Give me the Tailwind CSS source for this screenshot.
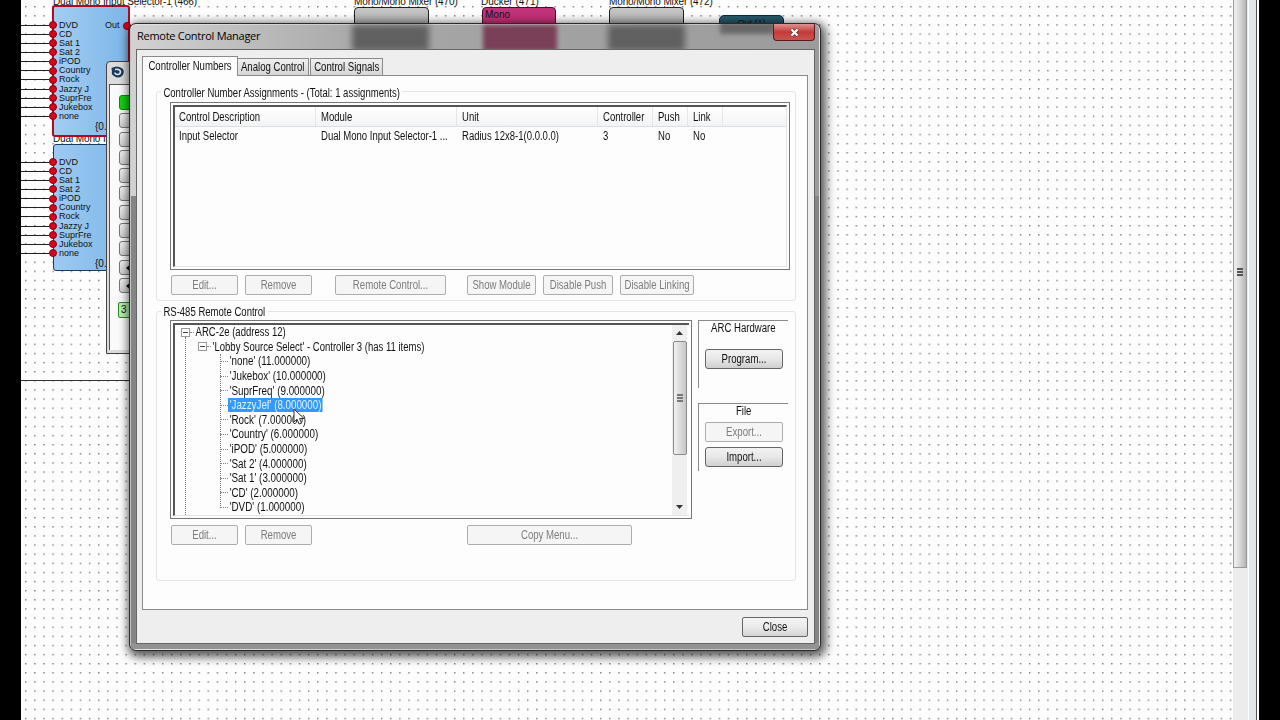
<!DOCTYPE html>
<html lang="en">
<head>
    <meta charset="UTF-8">
    <meta name="viewport" content="width=device-width, initial-scale=1.0">
    <title>Remote Control Manager</title>
    <script src="https://cdn.jsdelivr.net/npm/@tailwindcss/browser@4"></script>
    <style>
        /* condensed dialog font */
        .narrow {
            display: inline-block;
            transform: scaleX(0.795);
            transform-origin: left;
        }
        .narrow-center {
            display: flex;
            justify-content: center;
            transform: scaleX(0.8);
        }
    </style>
    <script>
        document.addEventListener('DOMContentLoaded', () => {
            const inputs = ['DVD', 'CD', 'Sat 1', 'Sat 2', 'iPOD', 'Country', 'Rock', 'Jazzy J', 'SuprFre', 'Jukebox', 'none'];
            const items = ["'none' (11.000000)", "'Jukebox' (10.000000)", "'SuprFreq' (9.000000)", "'JazzyJef' (8.000000)", "'Rock' (7.000000)", "'Country' (6.000000)", "'iPOD' (5.000000)", "'Sat 2' (4.000000)", "'Sat 1' (3.000000)", "'CD' (2.000000)", "'DVD' (1.000000)"];

            // Input pins, each with its wire coming in from the left
            document.querySelectorAll('.pins').forEach((list) => {
                inputs.forEach((name) => {
                    const row = document.createElement('div');
                    row.className = 'flex items-center h-[9.15px]';
                    row.innerHTML = `<span class="w-[28px] h-[1px] bg-[#222]"></span>
                                     <span class="size-[8px] rounded-full bg-[#d8041c] border border-[#8a0010]"></span>
                                     <span class="ml-[2px] whitespace-pre">${name}</span>`;
                    list.appendChild(row);
                });
            });

            const tree = document.getElementById('items');
            items.forEach((name, index) => {
                const selected = index === 3;
                const row = document.createElement('div');
                row.className = 'flex items-center h-[14.6px]';
                row.innerHTML = `<span class="w-[8px] border-t border-dotted border-[#888]"></span>
                                 <span class="${selected ? 'origin-left scale-x-[0.815] bg-[#3399ff] text-[#e4f2ff] pl-[2px] pr-[1px] h-[14px] leading-[14px]' : 'origin-left scale-x-[0.82] px-[2px]'}">${name}</span>`;
                tree.appendChild(row);
            });

            // Key caps of the panel behind the dialog, the last two carry arrows
            const keys = document.getElementById('keys');
            for (let i = 0; i < 11; i++) {
                const key = document.createElement('div');
                key.className = i === 0
                    ? 'h-[15px] w-[24px] rounded-[3px] border border-[#0a8a0a] bg-[#14d214]'
                    : 'h-[15px] w-[24px] rounded-[3px] border border-[#777] bg-linear-to-b from-[#f4f4f4] to-[#cfcfcf]';
                if (i > 8) {
                    key.innerHTML = '<svg class="ml-[6px] mt-[3px]" width="7" height="8"><path d="M0 4L4 0.500V3H7V6H4V7.500Z" fill="#111"/></svg>';
                }
                keys.appendChild(key);
            }
        });
    </script>
</head>
<body class="relative w-[1280px] h-[720px] overflow-hidden bg-black text-[12px] leading-[14px] text-[#111] font-['Liberation_Sans',sans-serif] whitespace-nowrap">

    <!-- design canvas -->
    <div class="absolute left-[21px] top-0 w-[1238px] h-[720px] overflow-hidden bg-[#fdfdfd]">
        <svg class="absolute inset-0" width="1212" height="720">
            <defs>
                <pattern id="grid" x="4" y="6" width="9.127" height="9.125" patternUnits="userSpaceOnUse">
                    <rect x="0" y="0.2" width="1.4" height="1.1" fill="#555"/>
                </pattern>
            </defs>
            <rect width="1212" height="720" fill="url(#grid)"/>
            <path d="M0 380.5H110" stroke="#333"/>
        </svg>

        <!-- input selector, selected -->
        <div class="absolute left-[31px] top-[5px] w-[78px] h-[132px] border-2 border-[#b4081e] rounded-[3px] bg-linear-to-r from-[#a3cdf2] to-[#7db6e8]"></div>
        <div class="absolute left-[32px] top-[-4px] text-[10px] leading-[12px] tracking-[-0.12px]">Dual Mono Input Selector-1 (466)</div>
        <div class="pins absolute left-0 top-[20.5px] text-[9px] leading-[9px]"></div>
        <div class="absolute left-[84px] top-[21px] flex items-center text-[9px] leading-[9px]">Out<span class="ml-[3px] size-[8px] rounded-full bg-[#d8041c] border border-[#8a0010]"></span></div>
        <div class="absolute left-[74px] top-[121px] text-[10px] leading-[12px]">{0.0}</div>

        <!-- second input selector -->
        <div class="absolute left-[32px] top-[144px] w-[76px] h-[127px] border border-[#1c3a5a] rounded-[3px] bg-linear-to-r from-[#9dcaf2] to-[#7db6e8]"></div>
        <div class="absolute left-[32px] top-[137px] h-[7px] w-[80px] overflow-hidden"><div class="-mt-[4px] text-[10px] leading-[12px] tracking-[-0.12px]">Dual Mono Input Selector-2</div></div>
        <div class="pins absolute left-0 top-[157.5px] text-[9px] leading-[9px]"></div>
        <div class="absolute left-[74px] top-[258px] text-[10px] leading-[12px]">{0.0}</div>

        <!-- mixers and ducker -->
        <div class="absolute left-[333px] top-[-4px] text-[10px] leading-[12px] tracking-[-0.12px]">Mono/Mono Mixer (470)</div>
        <div class="absolute left-[333px] top-[7px] w-[75px] h-[30px] rounded-[4px] border border-[#222] bg-linear-to-b from-[#c8c8c8] to-[#999]"></div>
        <div class="absolute left-[460px] top-[-4px] text-[10px] leading-[12px]">Ducker (471)</div>
        <div class="absolute left-[461px] top-[7px] w-[74px] h-[30px] rounded-[4px] border border-[#4a0c2c] bg-[#c23278] pl-[2px] text-[10px] leading-[13px]">Mono</div>
        <div class="absolute left-[588px] top-[-4px] text-[10px] leading-[12px] tracking-[-0.12px]">Mono/Mono Mixer (472)</div>
        <div class="absolute left-[588px] top-[7px] w-[75px] h-[30px] rounded-[4px] border border-[#222] bg-linear-to-b from-[#c8c8c8] to-[#999]"></div>
        <div class="absolute left-[698px] top-[15px] w-[65px] h-[20px] rounded-[5px] border border-[#0c2c36] bg-[#27596a] text-center text-[9px] leading-[15px]">Out (1)</div>

        <!-- vertical scrollbar -->
        <div class="absolute right-0 top-0 flex h-[720px] w-[26px] bg-white">
            <div class="w-[15px] bg-[#ececec]">
                <div class="flex h-[568px] w-[14px] flex-col items-center border border-t-0 border-[#999] bg-linear-to-r from-[#f2f2f2] via-[#d8d8d8] to-[#b4b4b4] pt-[268px]">
                    <div class="flex w-[6px] flex-col gap-[1px]"><span class="h-[2px] bg-[#555]"></span><span class="h-[2px] bg-[#555]"></span><span class="h-[2px] bg-[#555]"></span></div>
                </div>
            </div>
            <div class="ml-[1px] w-[8px] border-r border-[#555] bg-[#dfe7ec]"></div>
        </div>
    </div>

    <!-- selector panel behind the dialog -->
    <div class="absolute left-[106px] top-[61px] w-[60px] h-[293px] rounded-tl-[4px] border border-[#444] bg-[#dcdcdc] pl-[2px] pt-[22px]">
        <svg class="absolute left-[3px] top-[3px]" width="15" height="15" viewBox="0 0 15 15">
            <path d="M1.500 3Q8 -0.500 13 4Q15 8 12 11Q8 14 4 11Q1 9.500 2 7Z" fill="#1d3a5c"/>
            <path d="M5 4.500Q9.500 3.500 10.500 6.500Q10.500 9.500 7.500 9.500Q5 9.500 5 7.500" fill="none" stroke="#dfe8f0" stroke-width="1.500"/>
        </svg>
        <div class="h-[266px] border-l border-t border-[#555] bg-[#fafafa] pl-[9px] pt-[10px]">
            <div id="keys" class="flex flex-col gap-[3.3px]"></div>
            <div class="mt-[9px] -ml-[1px] h-[16px] w-[24px] rounded-[2px] border border-[#2b8a2b] bg-[#b6f0b0] pl-[2px] text-[10px] leading-[14px]">3</div>
        </div>
    </div>

    <!-- dialog -->
    <div class="absolute left-[129px] top-[23px] flex h-[628px] w-[692px] flex-col overflow-hidden rounded-[7px] border border-[#2a2a2a] bg-[#9c9c9c] pl-[6px] pr-[5px] pb-[6px] shadow-[2px_3px_10px_3px_rgba(0,0,0,0.65)]">
        <!-- glass frame with what shows through it -->
        <div class="absolute inset-0 border border-white/40 rounded-[6px] bg-linear-to-r from-[#d2d2d2] via-[#a6a6a6] via-35% to-[#9c9c9c]"></div>
        <div class="absolute left-[222px] top-[1px] h-[26px] w-[77px] bg-[#606060] blur-[3px]"></div>
        <div class="absolute left-[353px] top-[1px] h-[26px] w-[74px] bg-[#7a4058] blur-[2px]"></div>
        <div class="absolute left-[478px] top-[1px] h-[26px] w-[77px] bg-[#606060] blur-[3px]"></div>
        <div class="absolute left-[590px] top-[-2px] h-[12px] w-[55px] bg-[#686868] blur-[2px]"></div>
        <div class="absolute left-[1px] top-[172px] bottom-[1px] w-[5px] bg-[#858585]"></div>
        <div class="absolute right-[1px] top-[172px] bottom-[1px] w-[5px] bg-[#858585]"></div>
        <div class="absolute inset-x-[1px] bottom-[1px] h-[6px] bg-[#939393]"></div>

        <div class="relative flex h-[25px] shrink-0 items-start justify-between">
            <h1 class="pl-[1px] pt-[4px] text-[11px] leading-[15px] tracking-[-0.27px] text-black font-['Open_Sans',sans-serif]">Remote Control Manager</h1>
            <button class="flex h-[17px] w-[42px] items-center justify-center rounded-b-[4px] border border-t-0 border-[#5e1a1a] bg-linear-to-b from-[#dc9090] via-[#c23a38] via-50% to-[#c85450]">
                <svg width="11" height="9" viewBox="0 0 11 9"><path d="M2.500 1.500L8.500 7.500M8.500 1.500L2.500 7.500" stroke="#503030" stroke-width="3.600"/><path d="M2.500 1.500L8.500 7.500M8.500 1.500L2.500 7.500" stroke="#fff" stroke-width="2.300"/></svg>
            </button>
        </div>

        <div class="relative flex flex-1 flex-col border border-[#666] bg-[#eeeeee] pl-[5px] pr-[6px] pt-[6px]">
            <div class="flex h-[19px] items-end">
                <div class="relative z-10 -mb-[1px] flex h-[20px] w-[96px] items-center justify-center border border-b-0 border-[#8a8a8a] bg-[#fdfdfd] pb-[2px]"><span class="narrow-center">Controller Numbers</span></div>
                <div class="flex h-[17px] w-[71px] items-center justify-center border border-l-0 border-b-0 border-[#8a8a8a] bg-linear-to-b from-[#f0f0f0] to-[#d6d6d6]"><span class="narrow-center">Analog Control</span></div>
                <div class="ml-[1px] flex h-[17px] w-[73px] items-center justify-center border border-b-0 border-[#8a8a8a] bg-linear-to-b from-[#f0f0f0] to-[#d6d6d6]"><span class="narrow-center">Control Signals</span></div>
            </div>

            <div class="flex h-[535px] w-[666px] flex-col border border-[#8a8a8a] bg-[#fdfdfd] pl-[13px] pt-[15px]">
                <!-- assignments -->
                <section class="relative h-[210px] w-[640px] rounded-[3px] border border-[#e2e6e6] px-[13px] pt-[10px]">
                    <h2 class="narrow absolute left-[4px] -top-[6px] bg-[#fdfdfd] px-[3px]">Controller Number Assignments - (Total: 1 assignments)</h2>
                    <div class="h-[168px] w-[620px] border border-[#777] p-[2px]">
                        <div class="h-full border-l-2 border-t-2 border-[#555] border-r border-b border-r-[#e4e4e4] border-b-[#e4e4e4]">
                            <div class="flex h-[20px] items-center border-b border-[#dedede] bg-linear-to-b from-white to-[#f2f3f4] leading-[20px]">
                                <span class="h-full w-[141px] border-r border-[#e4e6e8] pl-[4px]"><span class="narrow">Control Description</span></span>
                                <span class="h-full w-[141px] border-r border-[#e4e6e8] pl-[5px]"><span class="narrow">Module</span></span>
                                <span class="h-full w-[141px] border-r border-[#e4e6e8] pl-[5px]"><span class="narrow">Unit</span></span>
                                <span class="h-full w-[55px] border-r border-[#e4e6e8] pl-[5px]"><span class="narrow">Controller</span></span>
                                <span class="h-full w-[35px] border-r border-[#e4e6e8] pl-[5px]"><span class="narrow">Push</span></span>
                                <span class="h-full w-[35px] border-r border-[#e4e6e8] pl-[5px]"><span class="narrow">Link</span></span>
                            </div>
                            <div class="flex h-[18px] items-center">
                                <span class="w-[141px] pl-[4px]"><span class="narrow">Input Selector</span></span>
                                <span class="w-[141px] pl-[5px]"><span class="narrow">Dual Mono Input Selector-1 ...</span></span>
                                <span class="w-[141px] pl-[5px]"><span class="narrow">Radius 12x8-1(0.0.0.0)</span></span>
                                <span class="w-[55px] pl-[5px]"><span class="narrow">3</span></span>
                                <span class="w-[35px] pl-[5px]"><span class="narrow">No</span></span>
                                <span class="w-[35px] pl-[5px]"><span class="narrow">No</span></span>
                            </div>
                        </div>
                    </div>
                    <div class="mt-[5px] flex pl-[1px] text-[#7c7c7c]">
                        <button class="h-[20px] w-[67px] rounded-[2px] border border-[#adadad] bg-[#f5f5f5]"><span class="narrow-center">Edit...</span></button>
                        <button class="ml-[7px] h-[20px] w-[67px] rounded-[2px] border border-[#adadad] bg-[#f5f5f5]"><span class="narrow-center">Remove</span></button>
                        <button class="ml-[23px] h-[20px] w-[111px] rounded-[2px] border border-[#adadad] bg-[#f5f5f5]"><span class="narrow-center">Remote Control...</span></button>
                        <button class="ml-[21px] h-[20px] w-[69px] rounded-[2px] border border-[#adadad] bg-[#f5f5f5]"><span class="narrow-center">Show Module</span></button>
                        <button class="ml-[7px] h-[20px] w-[70px] rounded-[2px] border border-[#adadad] bg-[#f5f5f5]"><span class="narrow-center">Disable Push</span></button>
                        <button class="ml-[7px] h-[20px] w-[74px] rounded-[2px] border border-[#adadad] bg-[#f5f5f5]"><span class="narrow-center">Disable Linking</span></button>
                    </div>
                </section>

                <!-- RS-485 -->
                <section class="relative mt-[10px] h-[270px] w-[640px] rounded-[3px] border border-[#e2e6e6] px-[13px] pt-[8px]">
                    <h2 class="narrow absolute left-[4px] -top-[7px] bg-[#fdfdfd] px-[3px]">RS-485 Remote Control</h2>
                    <div class="flex">
                        <div class="h-[199px] w-[522px] shrink-0 border border-[#777] p-[2px]">
                            <div class="flex h-full border-l-2 border-t-2 border-[#555] border-b border-b-[#e4e4e4]">
                                <div class="relative flex-1 pl-[6px]">
                                    <div class="absolute left-[10px] top-[12px] bottom-0 border-l border-dotted border-[#777]"></div>
                                    <div class="flex h-[14.6px] items-center">
                                        <span class="relative size-[9px] border border-[#999] bg-white"><i class="absolute left-[1px] top-[3px] h-[1px] w-[5px] bg-[#444]"></i></span>
                                        <span class="w-[4px] border-t border-dotted border-[#888]"></span>
                                        <span class="narrow pl-[2px]">ARC-2e (address 12)</span>
                                    </div>
                                    <div class="flex h-[14.6px] items-center pl-[17px]">
                                        <span class="relative size-[9px] border border-[#999] bg-white"><i class="absolute left-[1px] top-[3px] h-[1px] w-[5px] bg-[#444]"></i></span>
                                        <span class="w-[4px] border-t border-dotted border-[#888]"></span>
                                        <span class="narrow pl-[2px]">'Lobby Source Select' - Controller 3 (has 11 items)</span>
                                    </div>
                                    <div class="relative pl-[39px]">
                                        <div class="absolute left-[39px] top-0 bottom-[7px] border-l border-dotted border-[#777]"></div>
                                        <div id="items"></div>
                                    </div>
                                </div>
                                <div class="flex w-[15px] flex-col items-center bg-[#efefef]">
                                    <svg class="h-[16px] shrink-0" width="7" height="16"><path d="M0 10L3.500 6L7 10Z" fill="#333"/></svg>
                                    <div class="flex h-[114px] w-[14px] shrink-0 items-center justify-center rounded-[2px] border border-[#8a8a8a] bg-linear-to-r from-[#f2f2f2] to-[#c6c6c6]">
                                        <div class="flex w-[6px] flex-col gap-[1px]"><span class="h-[2px] bg-[#777]"></span><span class="h-[2px] bg-[#777]"></span><span class="h-[2px] bg-[#777]"></span></div>
                                    </div>
                                    <svg class="mt-auto h-[16px] shrink-0" width="7" height="16"><path d="M0 6L3.500 10L7 6Z" fill="#333"/></svg>
                                </div>
                                <div class="w-[2px]"></div>
                            </div>
                        </div>
                        <div class="ml-[6px] w-[90px] shrink-0">
                            <div class="flex h-[68px] flex-col items-center border-l border-t border-[#8a8a8a]">
                                <h3 class="narrow-center">ARC Hardware</h3>
                                <button class="mt-[14px] h-[20px] w-[78px] rounded-[3px] border border-[#666] bg-linear-to-b from-[#f2f2f2] via-[#e8e8e8] to-[#cfcfcf]"><span class="narrow-center">Program...</span></button>
                            </div>
                            <div class="mt-[15px] flex h-[68px] flex-col items-center border-l border-t border-[#8a8a8a]">
                                <h3 class="narrow-center">File</h3>
                                <button class="mt-[4px] h-[20px] w-[78px] rounded-[2px] border border-[#adadad] bg-[#f5f5f5] text-[#7c7c7c]"><span class="narrow-center">Export...</span></button>
                                <button class="mt-[5px] h-[20px] w-[78px] rounded-[3px] border border-[#666] bg-linear-to-b from-[#f2f2f2] via-[#e8e8e8] to-[#cfcfcf]"><span class="narrow-center">Import...</span></button>
                            </div>
                        </div>
                    </div>
                    <div class="mt-[6px] flex pl-[1px] text-[#7c7c7c]">
                        <button class="h-[20px] w-[67px] rounded-[2px] border border-[#adadad] bg-[#f5f5f5]"><span class="narrow-center">Edit...</span></button>
                        <button class="ml-[7px] h-[20px] w-[67px] rounded-[2px] border border-[#adadad] bg-[#f5f5f5]"><span class="narrow-center">Remove</span></button>
                        <button class="ml-[155px] h-[20px] w-[165px] rounded-[2px] border border-[#adadad] bg-[#f5f5f5]"><span class="narrow-center">Copy Menu...</span></button>
                    </div>
                </section>
            </div>

            <div class="mt-[7px] flex justify-end">
                <button class="h-[20px] w-[66px] rounded-[2px] border border-[#666] bg-linear-to-b from-[#f4f4f4] via-[#ebebeb] to-[#d4d4d4]"><span class="narrow-center">Close</span></button>
            </div>
        </div>
    </div>

    <!-- mouse pointer -->
    <svg class="absolute left-[293px] top-[408px]" width="14" height="18" viewBox="0 0 14 18">
        <path d="M1 1V14L4 11.200L6 16L8.500 15L6.500 10.500H11Z" fill="#fff" stroke="#333" stroke-width="1"/>
    </svg>
</body>
</html>
